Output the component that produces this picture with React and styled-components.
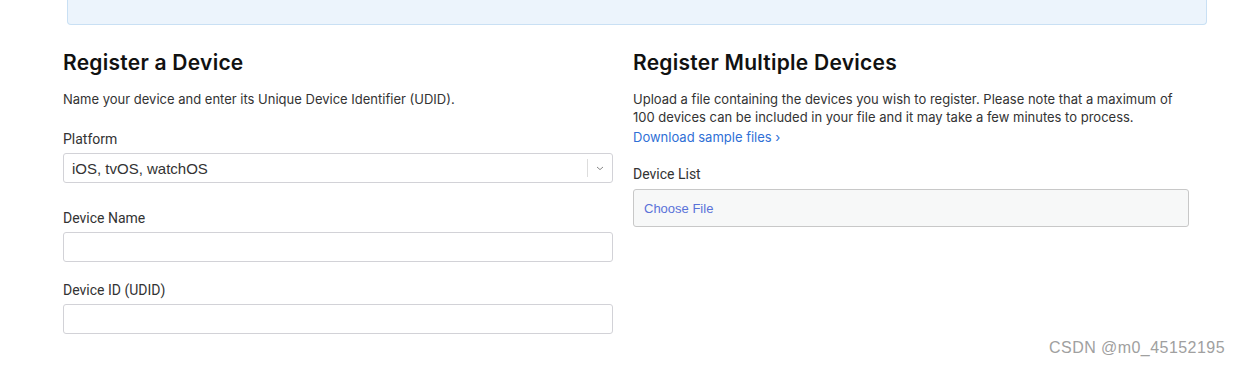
import React from "react";
import styled, { createGlobalStyle } from "styled-components";

const GlobalStyle = createGlobalStyle`
	html, body {
		margin: 0;
		padding: 0;
		background: #fff;
	}
	body {
		font-family: Inter, "Noto Sans", "Liberation Sans", sans-serif;
		color: #1d1d1f;
	}
`;

function App() {
	return (
		<Page>
			<GlobalStyle />
			<Banner />
			<Columns>
				<Column>
					<Heading>Register a Device</Heading>
					<Text>Name your device and enter its Unique Device Identifier (UDID).</Text>
					<Field $gap="22px">
						<Label>Platform</Label>
						<Select>
							<SelectValue>iOS, tvOS, watchOS</SelectValue>
							<SelectArrow>
								<svg width="8" height="5" viewBox="0 0 8 5">
									<path d="M1 1l3 2.6L7 1" fill="none" stroke="#888" strokeWidth="1" />
								</svg>
							</SelectArrow>
						</Select>
					</Field>
					<Field $gap="26px">
						<Label>Device Name</Label>
						<Input />
					</Field>
					<Field $gap="19px">
						<Label>Device ID (UDID)</Label>
						<Input />
					</Field>
				</Column>
				<Column $wide>
					<Heading>Register Multiple Devices</Heading>
					<Text>
						Upload a file containing the devices you wish to register. Please note that a maximum of
						100 devices can be included in your file and it may take a few minutes to process.
					</Text>
					<Link href="#">Download sample files ›</Link>
					<Field $gap="18px">
						<Label>Device List</Label>
						<FileBox>Choose File</FileBox>
					</Field>
				</Column>
			</Columns>
			<Watermark>CSDN @m0_45152195</Watermark>
		</Page>
	);
}

const Page = styled.div`
	position: relative;
	width: 1240px;
	height: 365px;
	overflow: hidden;
`;
const Banner = styled.div`
	margin: 0 33px 0 67px;
	height: 24px;
	background: #ecf4fc;
	border: 1px solid #c9e0f4;
	border-top: none;
	border-radius: 0 0 4px 4px;
`;
const Columns = styled.div`
	display: flex;
	gap: 20px;
	padding: 0 0 0 63px;
	margin-top: 24px;
`;
const Column = styled.div`
	width: ${(p) => (p.$wide ? "556px" : "550px")};
	display: flex;
	flex-direction: column;
`;
const Heading = styled.h2`
	margin: 0;
	font-size: 21px;
	line-height: 28px;
	font-weight: 600;
	letter-spacing: 0.25px;
	color: #111;
`;
const Text = styled.p`
	margin: 13px 0 0;
	font-size: 13px;
	line-height: 18px;
	color: #333;
`;
const Link = styled.a`
	margin-top: 1px;
	font-size: 13px;
	line-height: 20px;
	color: #2f6fd6;
	text-decoration: none;
`;
const Field = styled.div`
	display: flex;
	flex-direction: column;
	margin-top: ${(p) => p.$gap};
`;
const Label = styled.label`
	font-family: Roboto, "Liberation Sans", sans-serif;
	font-size: 14px;
	line-height: 18px;
	color: #333;
	margin-bottom: 5px;
`;
const Select = styled.div`
	display: flex;
	align-items: center;
	height: 28px;
	border: 1px solid #d2d2d7;
	border-radius: 3px;
	background: #fff;
`;
const SelectValue = styled.span`
	flex: 1;
	padding-left: 8px;
	font-family: "Liberation Sans", Arial, sans-serif;
	font-size: 15px;
	color: #333;
`;
const SelectArrow = styled.span`
	display: flex;
	align-items: center;
	justify-content: center;
	width: 24px;
	height: 18px;
	border-left: 1px solid #ddd;
`;
const Input = styled.input`
	box-sizing: border-box;
	height: 30px;
	border: 1px solid #d2d2d7;
	border-radius: 3px;
	padding: 0 8px;
	outline: none;
`;
const FileBox = styled.div`
	margin-top: 1px;
	height: 36px;
	display: flex;
	align-items: center;
	padding-left: 10px;
	background: #f7f8f8;
	border: 1px solid #c8c8c8;
	border-radius: 3px;
	font-family: "Liberation Sans", Arial, sans-serif;
	font-size: 13px;
	color: #5a72d8;
`;
const Watermark = styled.div`
	position: absolute;
	right: 15px;
	bottom: 8px;
	font-family: "Liberation Sans", Arial, sans-serif;
	font-size: 16px;
	color: #a0a0a0;
	letter-spacing: 0.45px;
`;

export default App;
